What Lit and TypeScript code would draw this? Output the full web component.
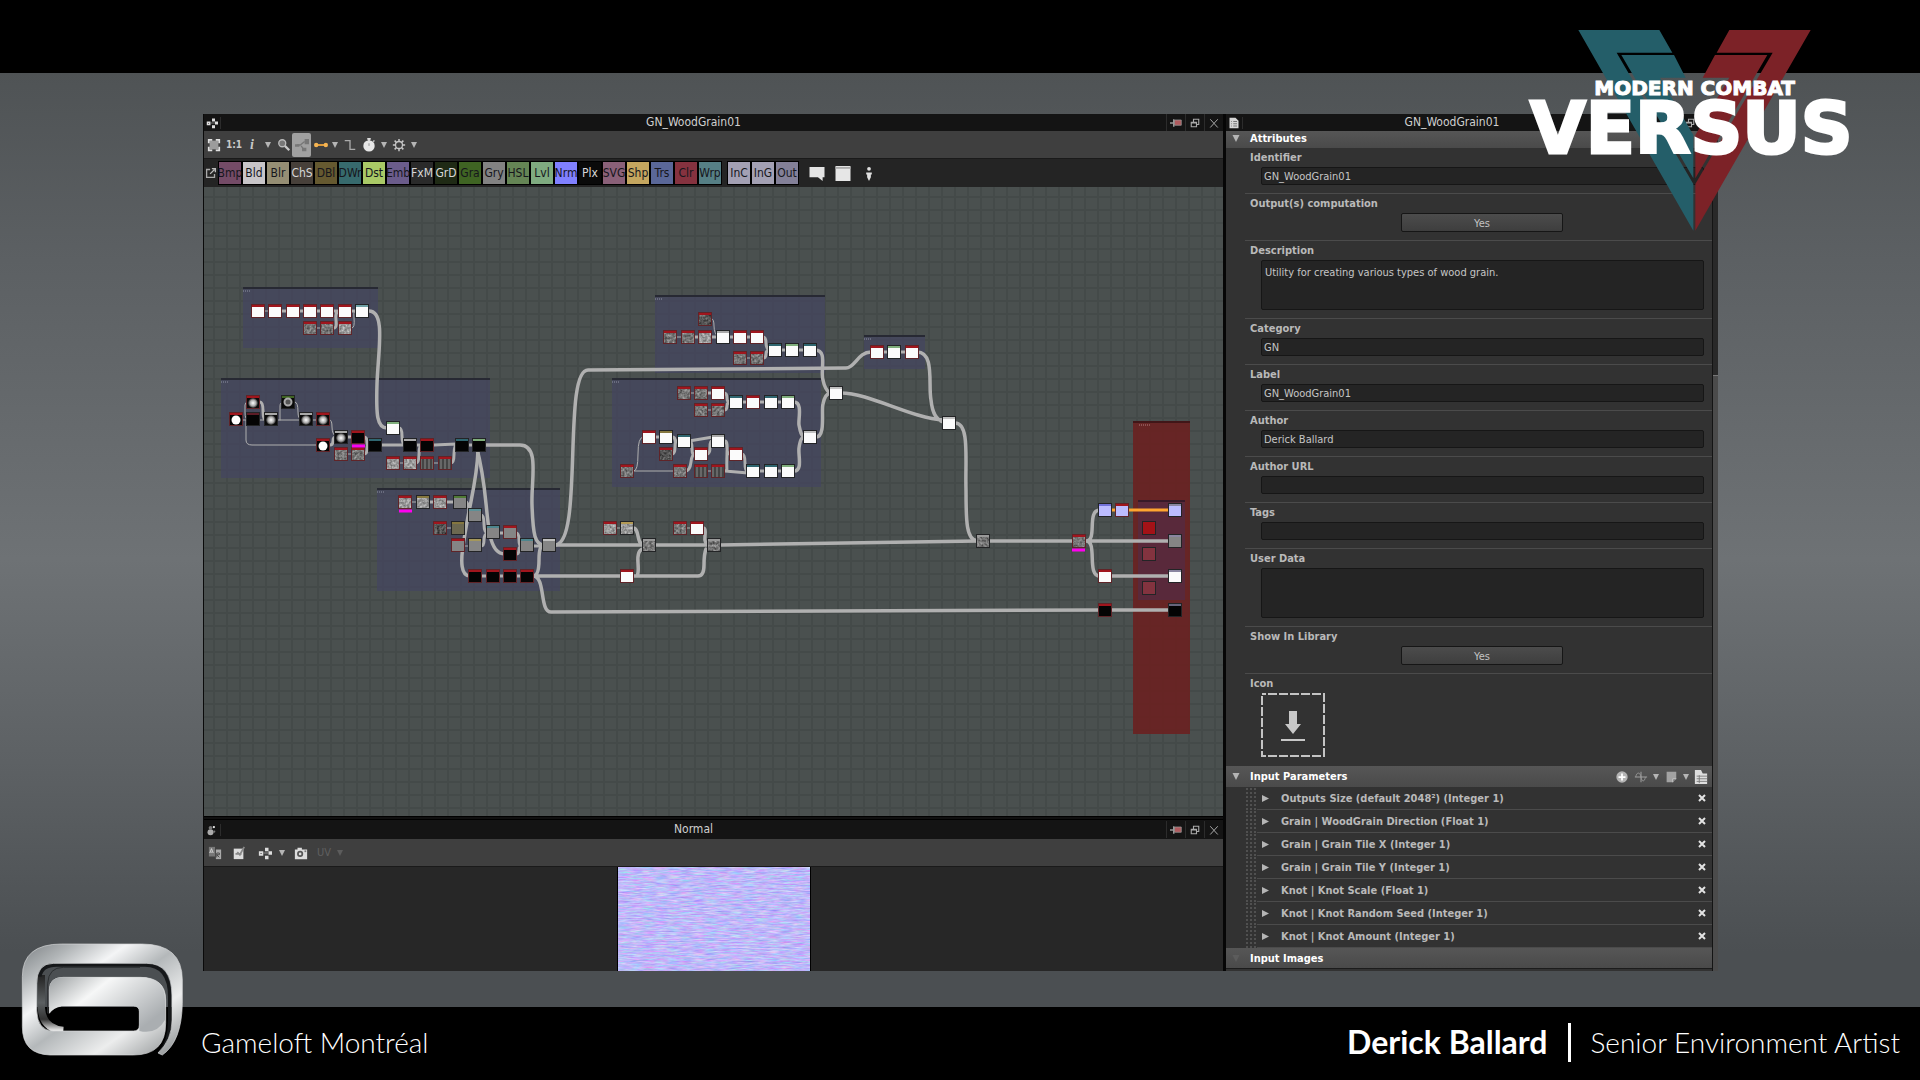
import { LitElement, html, svg, css, nothing } from "lit";
import { customElement } from "lit/decorators.js";

type Body = "w" | "g" | "l" | "n" | "d" | "s" | "k" | "b" | "x" | "y" | "c" | "o" | "r";
type GraphNode = [number, number, string, Body];

const RED = "#a0151d";
const TEAL = "#2f6670";
const GREEN = "#7fae7c";
const GREY = "#a9a9a9";
const OLIVE = "#85773f";

const TOOLS: [string, string, boolean?][] = [
  ["Bmp", "#744b67"], ["Bld", "#c8c5c8"], ["Blr", "#958e74"], ["ChS", "#47403a", true],
  ["DBl", "#655930"], ["DWr", "#376a6d"], ["Dst", "#a9c966"], ["Emb", "#6b5c8b"],
  ["FxM", "#2a2a2a", true], ["GrD", "#1f2a15", true], ["Gra", "#3f6423"], ["Gry", "#828282"],
  ["HSL", "#658555"], ["Lvl", "#7fab80"], ["Nrm", "#8080ff"], ["Plx", "#0a0a0a", true],
  ["SVG", "#8a6078"], ["Shp", "#c4a65f"], ["Trs", "#5a6798"], ["Clr", "#85323f"], ["Wrp", "#567f85"],
];
const IO_TOOLS: [string, string, boolean?][] = [["InC", "#a3a0b3"], ["InG", "#a3a0b3"], ["Out", "#838098"]];

const PARAMS = [
  "Outputs Size (default 2048²) (Integer 1)",
  "Grain | WoodGrain Direction (Float 1)",
  "Grain | Grain Tile X (Integer 1)",
  "Grain | Grain Tile Y (Integer 1)",
  "Knot | Knot Scale (Float 1)",
  "Knot | Knot Random Seed (Integer 1)",
  "Knot | Knot Amount (Integer 1)",
];

/* x, y, width, height of each comment frame */
const FRAMES = [
  [243, 287, 135, 61], [221, 378, 269, 100], [377, 488, 183, 103],
  [655, 295, 170, 78], [612, 378, 209, 109], [864, 335, 61, 34],
];

/* x, y, header colour, thumbnail kind */
const NODES: GraphNode[] = [
  [252, 305, RED, "w"], [269, 305, RED, "w"], [287, 305, RED, "w"], [304, 305, RED, "w"],
  [321, 305, RED, "w"], [339, 305, RED, "w"], [356, 305, "#6fa0a6", "w"],
  [304, 322, RED, "n"], [321, 322, RED, "n"], [339, 322, RED, "l"],
  [230, 413, RED, "c"], [247, 396, RED, "b"], [247, 413, "#5d1c26", "k"], [265, 413, GREY, "b"],
  [282, 396, "#3f6423", "o"], [300, 413, GREY, "b"], [317, 413, RED, "b"], [317, 439, RED, "c"],
  [335, 431, GREY, "b"], [352, 431, RED, "k"], [335, 448, RED, "n"], [352, 448, RED, "n"],
  [369, 439, TEAL, "k"], [387, 422, GREEN, "w"], [404, 439, GREY, "k"], [421, 439, RED, "k"],
  [456, 439, TEAL, "k"], [473, 439, GREEN, "k"], [387, 457, RED, "l"], [404, 457, RED, "l"],
  [421, 457, RED, "s"], [439, 457, RED, "s"],
  [399, 496, RED, "l"], [417, 496, OLIVE, "l"], [434, 496, RED, "l"], [454, 496, "#4f7a35", "g"],
  [469, 509, "#5c9097", "g"], [434, 522, RED, "d"], [452, 522, OLIVE, "y"], [452, 539, RED, "g"],
  [469, 539, "#a4975c", "g"], [487, 526, "#4d858d", "g"], [504, 526, RED, "g"], [521, 539, "#4d858d", "g"],
  [504, 548, RED, "k"], [543, 539, "#c0c0c0", "g"],
  [469, 570, RED, "k"], [487, 570, RED, "k"], [504, 570, RED, "k"], [521, 570, RED, "k"],
  [699, 313, RED, "d"], [664, 331, RED, "n"], [682, 331, RED, "n"], [699, 331, RED, "l"],
  [717, 331, GREY, "w"], [734, 331, RED, "w"], [751, 331, RED, "w"],
  [734, 352, RED, "n"], [751, 352, RED, "n"],
  [769, 344, TEAL, "w"], [786, 344, GREEN, "w"], [804, 344, TEAL, "w"],
  [871, 346, RED, "w"], [888, 346, GREEN, "w"], [906, 346, RED, "w"],
  [678, 387, RED, "n"], [695, 387, RED, "n"], [712, 387, RED, "w"],
  [695, 404, RED, "n"], [712, 404, RED, "n"],
  [730, 396, TEAL, "w"], [747, 396, RED, "w"], [765, 396, TEAL, "w"], [782, 396, GREEN, "w"],
  [643, 431, RED, "w"], [660, 431, OLIVE, "w"], [678, 435, TEAL, "w"], [660, 448, RED, "d"],
  [695, 448, RED, "w"], [712, 435, GREY, "w"], [730, 448, RED, "w"],
  [621, 465, RED, "n"], [674, 465, RED, "n"], [695, 465, RED, "s"], [712, 465, RED, "s"],
  [747, 465, TEAL, "w"], [765, 465, TEAL, "w"], [782, 465, GREEN, "w"],
  [804, 431, "#c0c0c0", "w"], [830, 387, "#c0c0c0", "w"], [943, 417, "#c0c0c0", "w"],
  [604, 522, RED, "l"], [621, 522, "#b39a55", "l"], [674, 522, RED, "n"], [691, 522, RED, "w"],
  [643, 539, "#999", "n"], [708, 539, "#999", "n"], [977, 535, "#999", "n"], [621, 570, RED, "w"],
  [1073, 535, RED, "n"], [1099, 504, "#7272d8", "x"], [1116, 504, RED, "x"], [1169, 504, "#8a86a0", "x"],
  [1169, 535, "#8a86a0", "g"], [1099, 570, RED, "w"], [1169, 570, "#8a86a0", "w"],
  [1099, 604, RED, "k"], [1169, 604, "#66647a", "k"],
  [1143, 522, "#a31217", "r"], [1143, 548, "#83333f", "r"], [1143, 582, "#83333f", "r"],
];

const THIN = [
  "M265 311H269M317 328H321M243 420H300M248 420Q245 420 245 412V405Q245 402 248 402M246 420V440Q246 445 252 445H317M280 420V406Q280 402 284 402M295 402Q298 402 298 412Q298 419 301 419M313 420H317",
  "M330 420Q332 420 332 427T336 437M352 328Q355 328 354 318T357 311M348 454H352M399 463H404M434 463H439M412 502H417M447 528H452M465 546H469",
  "M712 319Q714 319 714 326T718 337M677 337H682M747 358H751M690 393H695M708 410H712M634 471Q638 471 638 454T643 437M634 471H673M708 471H712M616 528H621M686 528H691",
];
const SHORT = [
  "M282 311H287M299 311H304M316 311H321M333 311H356M334 328Q337 328 336 320T339 311",
  "M260 402Q263 402 263 411T266 420M330 445Q333 445 333 441T336 437M347 437H352M364 437Q367 437 367 442T370 445M364 454Q367 454 367 449T370 445",
  "M381 445H404M399 428Q402 428 402 436T405 445M416 445H421M416 463Q419 463 419 454T422 445M434 445L456 444M451 463Q454 463 454 454T457 445M468 445H474",
  "M430 502H434M447 502H454M466 502Q469 502 469 515M481 515Q484 515 484 524T488 533M481 546Q484 546 484 540T488 533M499 533H505M516 533Q519 533 519 540T522 546M516 554Q519 554 519 550T522 546M533 546H544",
  "M695 337H700M712 337H718M729 337H735M746 337H752M763 337Q766 337 766 343T770 350M763 358Q766 358 766 354T770 350M781 350H787M798 350H804",
  "M708 393H712M724 393Q727 393 727 398T731 402M724 410Q727 410 727 406T731 402M742 402H748M759 402H765M777 402H783",
  "M655 437H661M672 437Q675 437 675 440T678 441M672 454Q675 454 675 447T678 441M689 441L713 437M690 441Q692 441 692 449T696 454M685 471Q690 471 691 462T696 454M707 454Q710 454 710 447T713 441M724 441Q727 441 727 448T731 454M725 441C729 441 726 455 727 471M725 471L748 473M742 454Q745 454 745 463T748 471M759 471H765M777 471H783",
  "M481 576H487M499 576H505M516 576H522M883 352H889M900 352H906",
];
const LONG = [
  "M369 311C386 311 378 352 377 384C376 415 377 428 387 428",
  "M486 445H520C540 445 531 480 532 505C533 535 535 545 544 545",
  "M478 450C477 482 470 500 464 540C460 562 461 576 470 576",
  "M476 445C487 485 485 510 490 535C492 545 496 554 505 554",
  "M533 576H621M533 576Q539 576 539 560T544 546M533 576C546 576 539 612 551 612L1100 610",
  "M555 545H643M655 545H708M720 545L977 541",
  "M555 545C584 545 562 370 588 370L846 368C855 368 858 352 871 352",
  "M815 350C828 350 820 370 823 380Q825 390 830 393",
  "M794 402C803 402 798 420 799 425S801 437 805 437",
  "M794 471C803 471 798 455 799 448S801 437 805 437",
  "M816 437C826 437 821 410 823 404Q825 394 830 393",
  "M841 393C870 393 910 418 944 420M917 352C935 352 928 385 931 400Q933 420 944 422",
  "M955 423C970 423 965 460 966 490C966 520 966 541 978 541",
  "M633 528C640 528 636 545 644 545M703 528Q706 528 705 536T709 545M633 576H698Q704 576 704 565T706 549M636 576Q639 576 638 563T643 549",
  "M989 541H1072M1084 541H1168M1086 541C1098 541 1086 510 1100 510M1086 541C1098 541 1086 576 1100 576M1111 576H1168M1111 610H1168",
];

const arrow = (cls = "") => html`<svg class="caret ${cls}" viewBox="0 0 6 6" aria-hidden="true"><path d="M0 0H6L3 6Z" fill="currentColor"/></svg>`;

const icons = {
  graph: svg`<path d="M1 6h5v5H1zM8 2h4v4H8zM12 6h4v4h-4zM8 11h4v4H8z" fill="#ddd"/><path d="M3 8h1v1H3z" fill="#222"/><path d="M6 8h6" stroke="#999"/>`,
  doc: svg`<path d="M2 1h8l4 4v10H2z" fill="#d5d5d5"/><path d="M4 6h1M7 6h5M4 9h1M7 9h5M4 12h1M7 12h5" stroke="#555"/>`,
  bulbs: svg`<circle cx="6" cy="11" r="4" fill="#aaa"/><circle cx="6" cy="5" r="2.500" fill="#777"/><circle cx="10.500" cy="4" r="1.500" fill="#eee"/><circle cx="11" cy="10" r="1.500" fill="#777"/>`,
  pin: svg`<path d="M0 8h6M5 3v10" stroke="#999" stroke-width="2" fill="none"/><path d="M6 4h9v7H6z" fill="#b05a5e" stroke="#999"/>`,
  restore: svg`<path d="M6 7V3h7v7h-3" stroke="#aaa" stroke-width="1.500" fill="none"/><path d="M3 7h7v6H3zM3 8h7" stroke="#aaa" stroke-width="1.500" fill="none"/>`,
  close: svg`<path d="M3 3l10 11M13 3L3 14" stroke="#aaa" stroke-width="1.300"/>`,
  select: svg`<path d="M3 3h10v10H3z" fill="#9c9c9c"/><path d="M2 6V2h4M10 2h4v4M14 10v4h-4M6 14H2v-4" stroke="#e0e0e0" stroke-width="2" fill="none"/>`,
  zoom: svg`<circle cx="6" cy="6" r="4" fill="#777" stroke="#bbb" stroke-width="1.500"/><path d="M9 9l5 5" stroke="#c8c8c8" stroke-width="2.500"/>`,
  links: svg`<path d="M2 8h4l5-4M7 9l3 4" stroke="#777" stroke-width="1.500" fill="none"/><path d="M0 7h5v3H0zM11 1h5v6h-5zM8 11h5v4H8z" fill="#777"/>`,
  wire: svg`<path d="M2 8h12" stroke="#f5a83c" stroke-width="2"/><circle cx="2.500" cy="8" r="2.500" fill="#f5b452"/><circle cx="13.500" cy="8" r="2.500" fill="#f5b452"/>`,
  step: svg`<path d="M2 3h6v10h6" stroke="#aaa" stroke-width="1.500" fill="none"/>`,
  watch: svg`<circle cx="8" cy="9" r="6.500" fill="#e6e6e6"/><path d="M6 1h4M8 2v2M13 3l1 1" stroke="#ddd" stroke-width="2"/><path d="M8 9V6" stroke="#888"/>`,
  gear: svg`<circle cx="8" cy="8" r="4" stroke="#c8c8c8" stroke-width="1.500" fill="none"/><path d="M8 1v3M8 12v3M1 8h3M12 8h3M3 3l2 2M11 11l2 2M3 13l2-2M11 5l2-2" stroke="#c8c8c8" stroke-width="1.700"/>`,
  popout: svg`<path d="M7 4H3v9h9V9" stroke="#aaa" stroke-width="1.500" fill="none"/><path d="M7 9l5-5M9 3h4v4" stroke="#bbb" stroke-width="1.500" fill="none"/>`,
  comment: svg`<path d="M0 1h16v11h-2v4l-5-4H0z" fill="#e4e4e4"/>`,
  frame: svg`<path d="M0 0h16v16H0z" fill="#e6e6e6"/><path d="M0 2h16" stroke="#aaa" stroke-width="2"/>`,
  point: svg`<circle cx="8" cy="3" r="2" fill="#e0e0e0"/><path d="M5 7h6v2H10v3l-2 4-2-4V9H5z" fill="#e0e0e0"/>`,
  compare: svg`<path d="M1 1h7v11H1z" fill="#777"/><path d="M9 4h6v11H9z" fill="#aaa"/><path d="M2 8l2-5 2 5M3 7h2" stroke="#ddd" fill="none"/><path d="M10 13V8h3v2h-3l3 3" stroke="#444" fill="none"/>`,
  save: svg`<path d="M2 3h11v12H2z" fill="#dcdcdc"/><path d="M4 9h7M6 7l3 3 5-9" stroke="#888" stroke-width="2" fill="none"/>`,
  camera: svg`<path d="M1 4h3V2h5v2h6v11H1z" fill="#dcdcdc"/><circle cx="7" cy="9" r="3.500" fill="#555"/><circle cx="7" cy="9" r="1.500" fill="#ddd"/><path d="M12 5h2v2h-2z" fill="#777"/>`,
  plus: svg`<circle cx="8" cy="8" r="6.500" fill="#b4b4b4"/><path d="M8 4v8M4 8h8" stroke="#fff" stroke-width="2"/>`,
  curve: svg`<path d="M1 8h14M8 2v12" stroke="#aaa"/><path d="M2 8c1-6 5-6 6 0s4 6 5 0" stroke="#999" fill="none"/>`,
  note: svg`<path d="M3 2h11v8l-4 4H3z" fill="#a2a2a2"/><path d="M14 10h-4v4" fill="#777" stroke="#ccc"/>`,
  sheet: svg`<path d="M1 0h7l2 4h5v12H1z" fill="#dedede"/><path d="M3 7h12M3 10h12M3 13h12M6 6v9" stroke="#777"/>`,
};

const icon = (name: keyof typeof icons) => html`<svg class="icon" viewBox="0 0 16 16" aria-hidden="true">${icons[name]}</svg>`;

@customElement("app-root")
export class AppRoot extends LitElement {
  static styles = css`
    :host { display: block; font-family: "DejaVu Sans Condensed", "Noto Sans", sans-serif; font-size: 11px; color: #c3c3c3; }
    * { box-sizing: border-box; }
    button, input, textarea { font: inherit; color: inherit; margin: 0; }
    button { border: 0; padding: 0; background: none; display: flex; align-items: center; justify-content: center; }
    .slide { position: relative; min-height: 100vh; display: grid; grid-template-rows: 73px 1fr 73px; background: #000; overflow: hidden; }
    .stage { grid-row: 2; display: flex; padding: 41px 202px 36px 203px;
      background: linear-gradient(#4f5355, #5c6063 20%, #6e7275 52%, #5c6063 75%, #4b4f52 94%, #4b4f52); }
    .window { flex: 1; min-width: 0; display: grid; grid-template-columns: minmax(0, 1019fr) minmax(0, 492fr); gap: 3px;
      background: #060606; border-left: 1px solid #0a0a0a; }
    .left { display: flex; flex-direction: column; min-width: 0; }
    .icon { width: 14px; height: 14px; display: block; flex: none; }
    .caret { width: 6px; height: 6px; display: block; color: #b5b5b5; }
    .caret.off { color: #5c5c5c; }
    .title { display: flex; align-items: center; height: 17px; background: #141414; flex: none; }
    .title.tall { height: 19px; }
    .title h2 { flex: 1; margin: 0; font-size: 12px; font-weight: 400; line-height: 17px; text-align: center; color: #cfcfcf; }
    .title .mark { width: 17px; display: flex; justify-content: center; border-right: 1px solid #2c2c2c; }
    .title .icon { width: 12px; height: 12px; }
    .title button { width: 19px; height: 17px; border-left: 1px solid #2c2c2c; }
    .bar { display: flex; align-items: center; height: 28px; flex: none; background: #3f3f3f; border-bottom: 1px solid #1a1a1a; color: #c8c8c8; }
    .bar button { height: 24px; flex: none; }
    .w8 { width: 8px; } .w14 { width: 14px; } .w16 { width: 16px; } .w19 { width: 19px; } .w20 { width: 20px; }
    .w22 { width: 22px; } .w26 { width: 26px; } .w30 { width: 30px; }
    .bar .on { background: #a0a0a0; border-radius: 2px; }
    .bar .ratio { font-size: 10px; font-weight: 700; }
    .bar .info { font: italic 700 14px "Liberation Serif", serif; }
    .bar .uv { color: #5f5f5f; width: 16px; }
    .tools { display: flex; align-items: center; height: 28px; flex: none; background: #242424; }
    .set { display: flex; gap: 2px; padding: 1px; background: #000; margin-right: 5px; }
    .chip { width: 22px; height: 22px; line-height: 24px; font-size: 12px; color: #16161c; white-space: nowrap; }
    .chip.light { color: #d8d8d8; }
    .tools .extra { width: 22px; height: 20px; margin: 0 2px; }
    .tools .extra .icon { width: 16px; height: 15px; }
    .canvas { flex: 1; min-height: 0; overflow: hidden; background: #4a504f; }
    .canvas svg { display: block; width: 100%; height: 100%; }
    .view { height: 104px; flex: none; background: #272727; display: flex; justify-content: center; }
    .view svg { width: 194px; height: 104px; border-left: 1px solid #000; border-right: 1px solid #000; }
    .split { height: 4px; flex: none; background: #101010; border-top: 1px solid #000; border-bottom: 1px solid #000; }
    .props { display: flex; flex-direction: column; min-width: 0; background: #323232; }
    .body { flex: 1; min-height: 0; display: grid; grid-template-columns: minmax(0, 1fr) 6px; }
    .scroll { border-left: 1px solid #141414; background: #292929; display: flex; flex-direction: column; justify-content: flex-end; }
    .thumb { height: 71%; background: #4b4b4b; border-top: 1px solid #777; }
    .head { display: flex; align-items: center; gap: 10px; height: 21px; padding: 0 4px 0 6px; background: linear-gradient(#565656, #4a4a4a); color: #fff; }
    .head.first { height: 17px; padding-bottom: 2px; }
    .head.images { border-bottom: 1px solid #1c1c1c; }
    .head h3 { flex: 1; margin: 0; font-size: 11px; line-height: 15px; font-weight: 700; }
    .head .acts { display: flex; align-items: center; gap: 5px; }
    .head .caret { width: 8px; height: 7px; }
    .head .acts .caret { width: 6px; height: 6px; }
    .row { margin-left: 19px; padding: 0 8px 8px 5px; border-top: 1px solid #4b4b4b; display: flex; flex-direction: column; }
    .row.bare { border-top: 0; }
    .row.last { padding-bottom: 9px; }
    .row label { font-weight: 700; line-height: 19px; height: 19px; color: #b9b9b9; }
    .row input, .row textarea { display: block; margin-left: 11px; background: #242424; border: 1px solid #161616; border-radius: 2px;
      padding: 1px 2px 0; height: 18px; line-height: 16px; resize: none; outline: 0; color: #c6c6c6; width: calc(100% - 11px); }
    .row textarea { height: 50px; padding: 4px 3px 3px; }
    .toggle { align-self: center; width: 162px; height: 19px; margin-left: 10px; padding-top: 1px; border: 1px solid #161616; border-radius: 2px; background: linear-gradient(#4c4c4c, #3e3e3e); }
    .drop { width: 64px; height: 64px; margin-left: 11px; }
    .drop svg { width: 64px; height: 64px; display: block; }
    .params { list-style: none; margin: 0 0 0 19px; padding: 0; display: flex; flex-direction: column; }
    .params li { display: grid; grid-template-columns: 12px 16px 1fr 20px; height: 23px; align-items: stretch; }
    .params li > * { border-bottom: 1px solid #4b4b4b; display: flex; align-items: center; }
    .params .grip { border-bottom: 0; background: radial-gradient(circle, #505050 1px, transparent 1px) 0 0 / 4px 4px; }
    .params .name { font-weight: 700; color: #b9b9b9; white-space: nowrap; padding-left: 8px; }
    .params button { justify-content: center; }
    .params .caret { width: 7px; height: 7px; transform: rotate(-90deg); }
    .foot { grid-row: 3; display: flex; align-items: flex-start; justify-content: space-between; padding: 15px 20px 0 201px; color: #fff; font-family: Lato, sans-serif; line-height: 40px; }
    .studio { font-size: 28px; font-weight: 300; }
    .who { display: flex; align-items: center; gap: 20px; font-size: 28px; font-weight: 300; }
    .who strong { font-size: 32px; font-weight: 700; }
    .rule { width: 3px; height: 39px; background: #fff; }
    .emblem { position: absolute; left: 20px; bottom: 22px; width: 166px; height: 116px; }
    .versus { position: absolute; right: 20px; top: 10px; width: 420px; height: 230px; font-family: "DejaVu Sans", sans-serif; font-weight: 700; }
  `;

  private titleBar(name: string, mark: keyof typeof icons, tall = false) {
    return html`<header class="title ${tall ? "tall" : ""}">
      <span class="mark">${icon(mark)}</span><h2>${name}</h2>
      <button aria-label="Pin">${icon("pin")}</button>
      <button aria-label="Restore">${icon("restore")}</button>
      <button aria-label="Close">${icon("close")}</button>
    </header>`;
  }

  private chips(list: [string, string, boolean?][]) {
    return html`<div class="set">${list.map(([t, c, light]) => html`<button class="chip ${light ? "light" : ""}" style="background:${c}">${t}</button>`)}</div>`;
  }

  private node([x, y, head, kind]: GraphNode) {
    const fills: Record<Body, string> = {
      w: "#fbfbfb", g: "#858585", l: "#9a9a9a", n: "#767676", d: "#555", s: "url(#bars)", k: "#040404",
      b: "#0a0a0a", x: "#bcbcff", y: "#6c6850", c: "#040404", o: "#0a0a0a", r: head,
    };
    const noisy = "nld".includes(kind);
    const cx = x + 6, cy = y + 7;
    return svg`<g>
      <rect x=${x - 1} y=${y - 1} width="14" height="14" fill="#232426"/>
      <rect x=${x} y=${y} width="12" height="12" fill=${fills[kind]} filter=${noisy ? "url(#noise)" : nothing}/>
      <rect x=${x} y=${y} width="12" height=${kind === "r" ? 12 : 2} fill=${head}/>
      ${head === RED && kind !== "r" ? svg`<rect x=${x - 0.5} y=${y - 0.5} width="13" height="13" fill="none" stroke="#7a2529" stroke-opacity=".7"/>` : nothing}
      ${kind === "b" ? svg`<circle cx=${cx} cy=${cy} r="5" fill="url(#ball)"/>` : nothing}
      ${kind === "c" ? svg`<circle cx=${cx} cy=${cy} r="4.500" fill="#fff"/>` : nothing}
      ${kind === "o" ? svg`<circle cx=${cx} cy=${cy - 1} r="3.500" fill="#555" stroke="#aaa" stroke-width="2"/>` : nothing}
    </g>`;
  }

  private graph() {
    return html`<svg viewBox="204 187 1019 629" preserveAspectRatio="xMidYMid slice" role="img" aria-label="Node graph">
      <defs>
        <pattern id="grid" width="13" height="13" patternUnits="userSpaceOnUse" x="213" y="274">
          <path d="M1 0V13M0 1H13" stroke="#444a49" stroke-width="2"/>
        </pattern>
        <pattern id="bars" width="4" height="12" patternUnits="userSpaceOnUse"><path d="M0 0H4V12H0Z" fill="#444"/><path d="M1 0V12" stroke="#8a8a8a"/></pattern>
        <radialGradient id="ball"><stop offset="0" stop-color="#fff"/><stop offset=".6" stop-color="#aaa"/><stop offset="1" stop-color="#222"/></radialGradient>
        <filter id="noise" x="0" y="0" width="1" height="1" color-interpolation-filters="sRGB"><feTurbulence type="fractalNoise" baseFrequency=".4" numOctaves="2"/>
          <feColorMatrix values="1 0 0 0 0 1 0 0 0 0 1 0 0 0 0 0 0 0 0 1" result="grain"/>
          <feComposite in="SourceGraphic" in2="grain" operator="arithmetic" k2="1" k3=".6" k4="-.3"/></filter>
      </defs>
      <rect x="0" y="0" width="1920" height="1080" fill="url(#grid)"/>
      ${FRAMES.map(([x, y, w, h]) => svg`<rect x=${x} y=${y} width=${w} height=${h} fill="#44465f" fill-opacity=".75"/>
        <rect x=${x} y=${y} width=${w} height="2" fill="#272933"/>
        <path d="M${x} ${y + 4}h8" stroke="#8f92a5" stroke-dasharray="1 1"/>`)}
      <rect x="1133" y="421" width="57" height="313" fill="#692222" fill-opacity=".92"/>
      <rect x="1133" y="421" width="57" height="2" fill="#411618"/>
      <path d="M1139 425h11" stroke="#b08080" stroke-dasharray="1 1"/>
      <rect x="1138" y="500" width="47" height="100" fill="#572a40" fill-opacity=".85"/>
      <rect x="1138" y="500" width="47" height="2" fill="#381a28"/>
      <g fill="none" stroke="#b0b0b0" stroke-linecap="round">
        ${THIN.map((d) => svg`<path d=${d} stroke-width="1"/>`)}
        ${SHORT.map((d) => svg`<path d=${d} stroke-width="3"/>`)}
        ${LONG.map((d) => svg`<path d=${d} stroke-width="3.500"/>`)}
      </g>
      <path d="M1111 510H1116M1128 510H1168" stroke="#ffa530" stroke-width="3"/>
      ${NODES.map((n) => this.node(n))}
      <path d="M352 446H365M399 511H412M1072 550H1085" stroke="#ff00f0" stroke-width="3"/>
    </svg>`;
  }

  private field(id: string, label: string, value: string, multi = false, bare = false) {
    return html`<div class="row ${bare ? "bare" : ""}"><label for=${id}>${label}</label>
      ${multi ? html`<textarea id=${id} .value=${value}></textarea>` : html`<input id=${id} type="text" .value=${value}>`}</div>`;
  }

  private toggle(id: string, label: string) {
    return html`<div class="row"><label for=${id}>${label}</label><button id=${id} class="toggle">Yes</button></div>`;
  }

  private versus() {
    return html`<svg class="versus" viewBox="0 0 1260 690" role="img" aria-label="Modern Combat Versus">
      <g fill="#245e69"><path d="M295 60H538L577 128H410L640 522V662Z"/><path d="M424 135H582L617 203H540L640 375V505Z"/></g>
      <g fill="#7c2227"><path d="M992 60H748L710 128H878L646 522V662Z"/><path d="M862 135H705L668 203H748L646 375V505Z"/></g>
      <g fill="#fff" stroke="#fff" text-anchor="middle">
        <text x="644" y="254" font-size="60" stroke-width="3">MODERN COMBAT</text>
        <text x="634" y="430" font-size="216" stroke-width="9">VERSUS</text>
      </g>
    </svg>`;
  }

  private emblem() {
    return html`<svg class="emblem" viewBox="60 66 498 348" role="img" aria-label="Gameloft">
      <defs>
        <linearGradient id="steel" x1="0" y1="0" x2="1" y2="1">
          <stop offset="0" stop-color="#7d8285"/><stop offset=".16" stop-color="#b0b4b6"/><stop offset=".33" stop-color="#f4f5f6"/><stop offset=".5" stop-color="#b4b8ba"/>
          <stop offset=".72" stop-color="#eceded"/><stop offset="1" stop-color="#85898b"/>
        </linearGradient>
        <linearGradient id="core" x1="0" y1="0" x2="1" y2=".6"><stop offset="0" stop-color="#9a9ea0"/><stop offset=".4" stop-color="#f6f7f7"/><stop offset="1" stop-color="#aaaeb1"/></linearGradient>
        <linearGradient id="bevel" x1="0" y1="0" x2="0" y2="1"><stop offset="0" stop-color="#222"/><stop offset=".5" stop-color="#5c6062"/><stop offset=".8" stop-color="#333"/><stop offset="1" stop-color="#e8e8e8"/></linearGradient>
      </defs>
      <path d="M143 270Q148 330 200 330H412V262H190Q160 262 148 280Z" fill="#000"/>
      <path d="M124 165V265Q128 326 190 331" fill="none" stroke="url(#bevel)" stroke-width="22"/>
      <path d="M120 170Q124 135 170 135H435Q509 135 509 230V300Q509 365 478 400" fill="none" stroke="#16181a" stroke-width="10"/>
      <path d="M143 280V190Q146 142 190 142H420" fill="none" stroke="#2c2f31" stroke-width="3"/>
      <path fill-rule="evenodd" d="M185 72H425Q547 72 547 180V250Q545 365 487 405L474 399Q516 360 516 300V225Q516 130 440 130H160Q110 130 110 190V270Q112 333 160 333H400Q418 333 418 315V275Q418 258 400 258H185Q160 262 148 280V210Q148 172 190 172H420Q497 172 497 240V310Q497 405 400 405H150Q67 402 67 320V170Q67 72 185 72Z" fill="url(#steel)" stroke="#d8dadb" stroke-width="2"/>
      <path d="M148 280V210Q148 172 190 172H420Q495 172 495 240V300Q470 345 418 333V275Q418 258 400 258H185Q160 262 148 280Z" fill="url(#core)"/>
    </svg>`;
  }

  render() {
    return html`<div class="slide">
      <main class="stage"><div class="window">
        <section class="left">
          ${this.titleBar("GN_WoodGrain01", "graph")}
          <div class="bar">
            <button class="w20" aria-label="Fit">${icon("select")}</button>
            <button class="w20 ratio">1:1</button>
            <button class="w16 info">i</button>
            <button class="w16" aria-label="Info options">${arrow()}</button>
            <button class="w16" aria-label="Find">${icon("zoom")}</button>
            <button class="w19 on" aria-label="Links">${icon("links")}</button>
            <button class="w20" aria-label="Wires">${icon("wire")}</button>
            <button class="w8" aria-label="Wire options">${arrow()}</button>
            <button class="w22" aria-label="Elbow">${icon("step")}</button>
            <button class="w16" aria-label="Timing">${icon("watch")}</button>
            <button class="w14" aria-label="Timing options">${arrow()}</button>
            <button class="w16" aria-label="Settings">${icon("gear")}</button>
            <button class="w14" aria-label="Settings options">${arrow()}</button>
          </div>
          <div class="tools">
            <button aria-label="Pop out">${icon("popout")}</button>
            ${this.chips(TOOLS)}${this.chips(IO_TOOLS)}
            <button class="extra" aria-label="Comment">${icon("comment")}</button>
            <button class="extra" aria-label="Frame">${icon("frame")}</button>
            <button class="extra" aria-label="Pin point">${icon("point")}</button>
          </div>
          <div class="canvas">${this.graph()}</div>
          <div class="split"></div>
          ${this.titleBar("Normal", "bulbs", true)}
          <div class="bar">
            <button class="w22" aria-label="Compare">${icon("compare")}</button>
            <button class="w26" aria-label="Save">${icon("save")}</button>
            <button class="w26" aria-label="Outputs">${icon("graph")}</button>
            <button class="w8" aria-label="Output options">${arrow()}</button>
            <button class="w30" aria-label="Snapshot">${icon("camera")}</button>
            <button class="uv">UV</button>
            <button class="w16" aria-label="UV options">${arrow("off")}</button>
          </div>
          <div class="view"><svg role="img" aria-label="Normal map">
            <filter id="fiber" x="0" y="0" width="1" height="1" color-interpolation-filters="sRGB"><feTurbulence type="fractalNoise" baseFrequency=".08 .7" numOctaves="3" seed="4"/>
              <feColorMatrix values=".45 0 0 0 .52 0 .45 0 0 .5 0 0 .15 0 .9 0 0 0 0 1"/></filter>
            <rect width="192" height="104" filter="url(#fiber)"/></svg></div>
        </section>

        <section class="props">
          ${this.titleBar("GN_WoodGrain01", "doc")}
          <div class="body">
            <div>
              <div class="head first">${arrow()}<h3>Attributes</h3></div>
              ${this.field("identifier", "Identifier", "GN_WoodGrain01", false, true)}
              ${this.toggle("computation", "Output(s) computation")}
              ${this.field("description", "Description", "Utility for creating various types of wood grain.", true)}
              ${this.field("category", "Category", "GN")}
              ${this.field("label", "Label", "GN_WoodGrain01")}
              ${this.field("author", "Author", "Derick Ballard")}
              ${this.field("url", "Author URL", "")}
              ${this.field("tags", "Tags", "")}
              ${this.field("userdata", "User Data", "", true)}
              ${this.toggle("library", "Show In Library")}
              <div class="row last"><label for="icon">Icon</label>
                <button id="icon" class="drop"><svg viewBox="0 0 64 64" aria-hidden="true">
                  <path d="M1 1H63V63H1Z" fill="none" stroke="#c4c4c4" stroke-width="2" stroke-dasharray="9 2" stroke-dashoffset="5"/>
                  <path d="M28 18h8v13h4l-8 10-8-10h4zM20 46h24v2H20z" fill="#c8c8c8"/></svg></button></div>
              <div class="head">${arrow()}<h3>Input Parameters</h3>
                <div class="acts">
                  <button aria-label="Add">${icon("plus")}</button><button aria-label="Function">${icon("curve")}</button>
                  <button aria-label="Function options">${arrow()}</button><button aria-label="Presets">${icon("note")}</button>
                  <button aria-label="Preset options">${arrow()}</button><button aria-label="List">${icon("sheet")}</button>
                </div></div>
              <ul class="params">${PARAMS.map((p) => html`<li><span class="grip"></span><button aria-label="Expand">${arrow()}</button>
                <span class="name">${p}</span><button aria-label="Remove"><svg width="8" height="8" viewBox="0 0 8 8"><path d="M1 1l6 6M7 1L1 7" stroke="#e2e2e2" stroke-width="2"/></svg></button></li>`)}</ul>
              <div class="head images">${arrow("off")}<h3>Input Images</h3></div>
            </div>
            <div class="scroll"><div class="thumb"></div></div>
          </div>
        </section>
      </div></main>
      <footer class="foot"><span class="studio">Gameloft Montréal</span>
        <div class="who"><strong>Derick Ballard</strong><span class="rule"></span><span>Senior Environment Artist</span></div></footer>
      ${this.versus()}${this.emblem()}
    </div>`;
  }
}
